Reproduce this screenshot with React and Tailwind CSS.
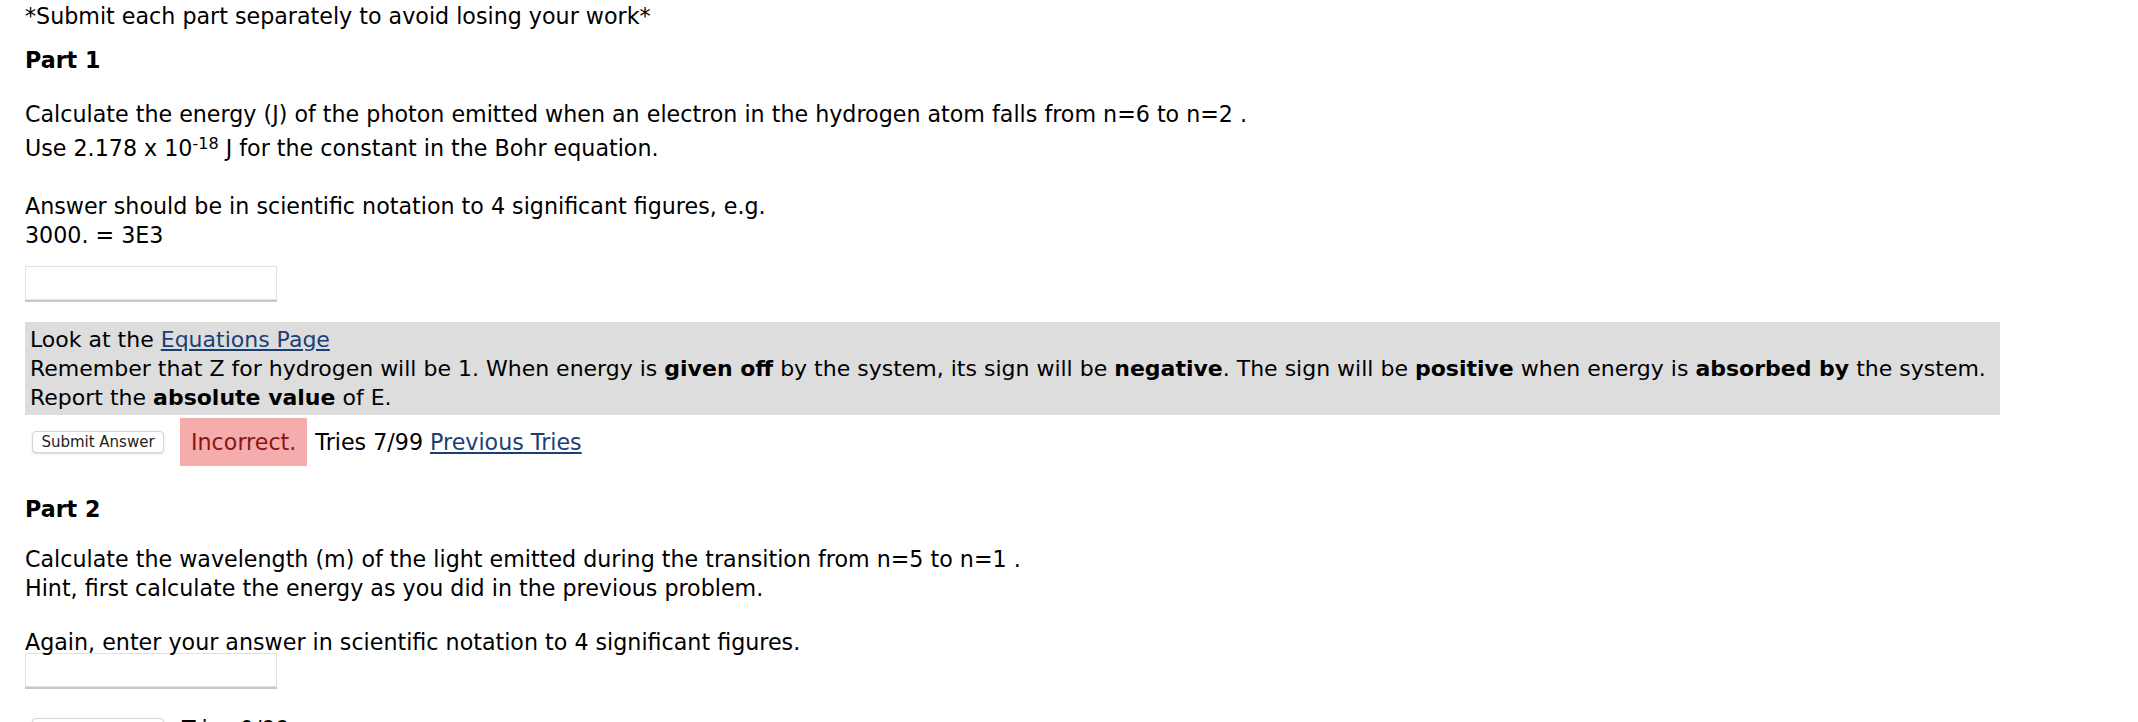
import React from "react";

function AnswerInput() {
  return (
    <input
      type="text"
      className="block w-[252px] h-[34px] bg-white border border-[#e2e2e2] shadow-[0_2px_0_#c8c8c8] outline-none"
    />
  );
}

function SubmitButton() {
  return (
    <button className="h-[22px] w-[132px] bg-white border border-[#d4d4d4] rounded-[4px] shadow-[0_1px_2px_rgba(0,0,0,0.15)] text-[15px] leading-[20px] text-[#222] shrink-0">
      Submit Answer
    </button>
  );
}

export default function App() {
  return (
    <div className="min-h-screen bg-white text-black font-['DejaVu_Sans',sans-serif] text-[22.2px] leading-[29px] pl-[25px] pr-4 pt-[2px]">
      <p>*Submit each part separately to avoid losing your work*</p>

      {/* Part 1 */}
      <h3 className="font-bold mt-[15px]">Part 1</h3>
      <div className="mt-[25px]">
        Calculate the energy (J) of the photon emitted when an electron in the hydrogen atom falls from n=6 to n=2 .
        <br />
        Use 2.178 x 10<sup className="static align-[7px] text-[16px] leading-[30px]">-18</sup> J for the constant in the Bohr equation.
        <br />
        <br />
        Answer should be in scientific notation to 4 significant figures, e.g.
        <br />
        3000. = 3E3
      </div>
      <div className="mt-[16px]">
        <AnswerInput />
      </div>

      <div className="mt-[22px] w-[1975px] bg-[#dddddd] px-[5px] py-[3px] whitespace-nowrap text-[22px]">
        Look at the{" "}
        <a href="#" className="text-[#1c3f73] underline">
          Equations Page
        </a>
        <br />
        Remember that Z for hydrogen will be 1. When energy is <b>given off</b> by the system, its sign will be{" "}
        <b>negative</b>. The sign will be <b>positive</b> when energy is <b>absorbed by</b> the system.
        <br />
        Report the <b>absolute value</b> of E.
      </div>

      <div className="mt-[3px] flex items-center h-[48px] pl-[7px]">
        <SubmitButton />
        <span className="ml-[16px] h-[48px] flex items-center px-[11px] bg-[#f4acac] text-[#8b1414]">Incorrect.</span>
        <span className="ml-[8px]">Tries 7/99</span>
        <a href="#" className="ml-[7px] text-[#1c3f73] underline">
          Previous Tries
        </a>
      </div>

      {/* Part 2 */}
      <h3 className="font-bold mt-[29px]">Part 2</h3>
      <div className="mt-[21px]">
        Calculate the wavelength (m) of the light emitted during the transition from n=5 to n=1 .
        <br />
        Hint, first calculate the energy as you did in the previous problem.
      </div>
      <p className="mt-[25px]">Again, enter your answer in scientific notation to 4 significant figures.</p>
      <div className="-mt-[4px]">
        <AnswerInput />
      </div>

      <div className="mt-[18px] flex items-center h-[48px] pl-[7px]">
        <SubmitButton />
        <span className="ml-[18px]">Tries 0/99</span>
      </div>
    </div>
  );
}
